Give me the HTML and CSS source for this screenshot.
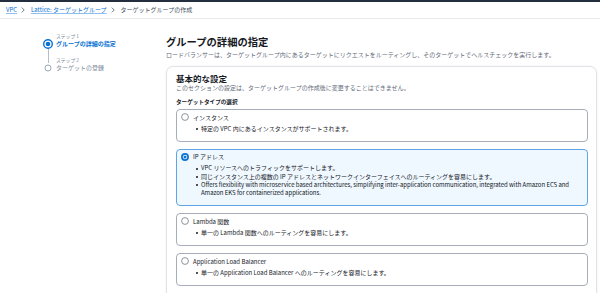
FILE: index.html
```html
<!DOCTYPE html>
<html lang="ja">
<head>
<meta charset="utf-8">
<link rel="stylesheet" href="styles.css">
</head>
<body>
<div class="topbar"></div>
<nav class="crumbs">
  <a class="crumb-link">VPC</a>
  <svg class="chev" width="4" height="6" viewBox="0 0 4 6"><path d="M0.8 0.6 L3.2 3 L0.8 5.4" fill="none" stroke="#5f6b7a" stroke-width="0.9"/></svg>
  <a class="crumb-link">Lattice: ターゲットグループ</a>
  <svg class="chev" width="4" height="6" viewBox="0 0 4 6"><path d="M0.8 0.6 L3.2 3 L0.8 5.4" fill="none" stroke="#5f6b7a" stroke-width="0.9"/></svg>
  <span class="crumb-cur">ターゲットグループの作成</span>
</nav>
<div class="layout">
  <aside class="steps">
    <div class="step">
      <div class="step-label">ステップ 1</div>
      <div class="step-row">
        <svg class="step-dot" width="10" height="10" viewBox="0 0 10 10"><circle cx="5" cy="5" r="4.3" fill="#fff" stroke="#0972d3" stroke-width="1.4"/><circle cx="5" cy="5" r="2.3" fill="#0972d3"/></svg>
        <span class="step-title active">グループの詳細の指定</span>
      </div>
    </div>
    <div class="step-line"></div>
    <div class="step">
      <div class="step-label">ステップ 2</div>
      <div class="step-row">
        <svg class="step-dot" width="10" height="10" viewBox="0 0 10 10"><circle cx="5" cy="5" r="3" fill="#fff" stroke="#9ba7b6" stroke-width="1"/></svg>
        <span class="step-title">ターゲットの登録</span>
      </div>
    </div>
  </aside>
  <main class="main">
    <h1 class="title">グループの詳細の指定</h1>
    <p class="subtitle">ロードバランサーは、ターゲットグループ内にあるターゲットにリクエストをルーティングし、そのターゲットでヘルスチェックを実行します。</p>
    <section class="card">
      <h2 class="card-title">基本的な設定</h2>
      <p class="card-desc">このセクションの設定は、ターゲットグループの作成後に変更することはできません。</p>
      <div class="field-label">ターゲットタイプの選択</div>
      <div class="tiles">
        <div class="tile">
          <div class="tile-head">
            <svg class="radio" width="8" height="8" viewBox="0 0 8 8"><circle cx="4" cy="4" r="3.4" fill="#fff" stroke="#7d8998" stroke-width="0.9"/></svg>
            <span>インスタンス</span>
          </div>
          <ul class="bullets">
            <li>特定の VPC 内にあるインスタンスがサポートされます。</li>
          </ul>
        </div>
        <div class="tile selected">
          <div class="tile-head">
            <svg class="radio" width="8" height="8" viewBox="0 0 8 8"><circle cx="4" cy="4" r="3.1" fill="#fff" stroke="#0972d3" stroke-width="1.7"/><circle cx="4" cy="4" r="1.5" fill="#0972d3"/></svg>
            <span>IP アドレス</span>
          </div>
          <ul class="bullets">
            <li>VPC リソースへのトラフィックをサポートします。</li>
            <li>同じインスタンス上の複数の IP アドレスとネットワークインターフェイスへのルーティングを容易にします。</li>
            <li class="en">Offers flexibility with microservice based architectures, simplifying inter-application communication, integrated with Amazon ECS and Amazon EKS for containerized applications.</li>
          </ul>
        </div>
        <div class="tile">
          <div class="tile-head">
            <svg class="radio" width="8" height="8" viewBox="0 0 8 8"><circle cx="4" cy="4" r="3.4" fill="#fff" stroke="#7d8998" stroke-width="0.9"/></svg>
            <span>Lambda 関数</span>
          </div>
          <ul class="bullets">
            <li>単一の Lambda 関数へのルーティングを容易にします。</li>
          </ul>
        </div>
        <div class="tile">
          <div class="tile-head">
            <svg class="radio" width="8" height="8" viewBox="0 0 8 8"><circle cx="4" cy="4" r="3.4" fill="#fff" stroke="#7d8998" stroke-width="0.9"/></svg>
            <span>Application Load Balancer</span>
          </div>
          <ul class="bullets">
            <li>単一の Application Load Balancer へのルーティングを容易にします。</li>
          </ul>
        </div>
      </div>
    </section>
  </main>
</div>
</body>
</html>
```
FILE: styles.css
```css
* { box-sizing: border-box; }
html, body {
  margin: 0;
  padding: 0;
  background: #ffffff;
  width: 600px;
  height: 293px;
  overflow: hidden;
  font-family: "Noto Sans CJK JP", "Noto Sans", sans-serif;
  color: #16191f;
}
.topbar {
  height: 1.5px;
  background: #232f3e;
}
.crumbs {
  height: 17.5px;
  border-bottom: 1px solid #e9ebed;
  display: flex;
  align-items: center;
  gap: 5px;
  padding-left: 6px;
  font-size: 6px;
  line-height: 8px;
}
.crumb-link {
  color: #0972d3;
  text-decoration: underline;
  text-decoration-color: rgba(9,114,211,0.45);
  text-underline-offset: 1px;
}
.crumb-link + .chev { margin-left: -1px; }
.chev { flex: none; margin-right: 1px; }
.crumb-cur { color: #414d5c; }
.layout {
  display: flex;
}
.steps {
  width: 166px;
  flex: none;
  padding-top: 14px;
  padding-left: 43px;
}
.step-label {
  font-size: 4.8px;
  line-height: 6px;
  color: #7d8998;
  padding-left: 13px;
}
.step-row {
  display: flex;
  align-items: center;
  gap: 3px;
  height: 8px;
  margin-top: 1px;
}
.step-title {
  font-size: 6px;
  line-height: 8px;
  color: #7d8998;
}
.step-title.active {
  color: #0972d3;
  font-weight: 700;
}
.step-line {
  width: 1px;
  height: 15px;
  background: #b6bec9;
  margin-left: 4.5px;
  margin-top: 0;
  margin-bottom: -6px;
}
.main {
  flex: 1;
  padding-top: 16px;
  padding-right: 3px;
}
.title {
  margin: 0;
  font-size: 10.3px;
  line-height: 14px;
  font-weight: 700;
  color: #16191f;
}
.subtitle {
  margin: 1px 0 0;
  font-size: 6px;
  line-height: 9px;
  color: #5f6b7a;
}
.card {
  margin-top: 7px;
  border: 1px solid #e0e3e7;
  border-radius: 7px;
  padding: 5px 8px 40px 9px;
  box-shadow: 0 0 2px rgba(0,7,22,0.08);
}
.card-title {
  margin: 0;
  font-size: 8.5px;
  line-height: 12px;
  font-weight: 700;
}
.card-desc {
  margin: 0;
  font-size: 6px;
  line-height: 8px;
  color: #5f6b7a;
}
.field-label {
  margin-top: 6px;
  font-size: 5.6px;
  line-height: 8px;
  font-weight: 700;
}
.tiles {
  margin-top: 3px;
  display: flex;
  flex-direction: column;
  gap: 7px;
}
.tile {
  border: 1px solid #a5adb8;
  border-radius: 4px;
  padding: 2.5px 10px 8px 4px;
  background: #ffffff;
}
.tile.selected {
  border-color: #5ea4e6;
  background: #f0f8ff;
}
.tile-head {
  display: flex;
  align-items: center;
  gap: 4px;
  font-size: 6px;
  line-height: 9px;
}
.radio { flex: none; }
.bullets {
  list-style: none;
  margin: 3px 0 0;
  padding: 0 0 0 20px;
  font-size: 6px;
  line-height: 8.3px;
}
.bullets li {
  position: relative;
}
.bullets li::before {
  content: "";
  position: absolute;
  left: -5px;
  top: 3.4px;
  width: 2px;
  height: 2px;
  border-radius: 50%;
  background: #16191f;
}
.bullets li.en {
  color: #0f141a;
  font-weight: 400;
  letter-spacing: -0.03px;
}
```
